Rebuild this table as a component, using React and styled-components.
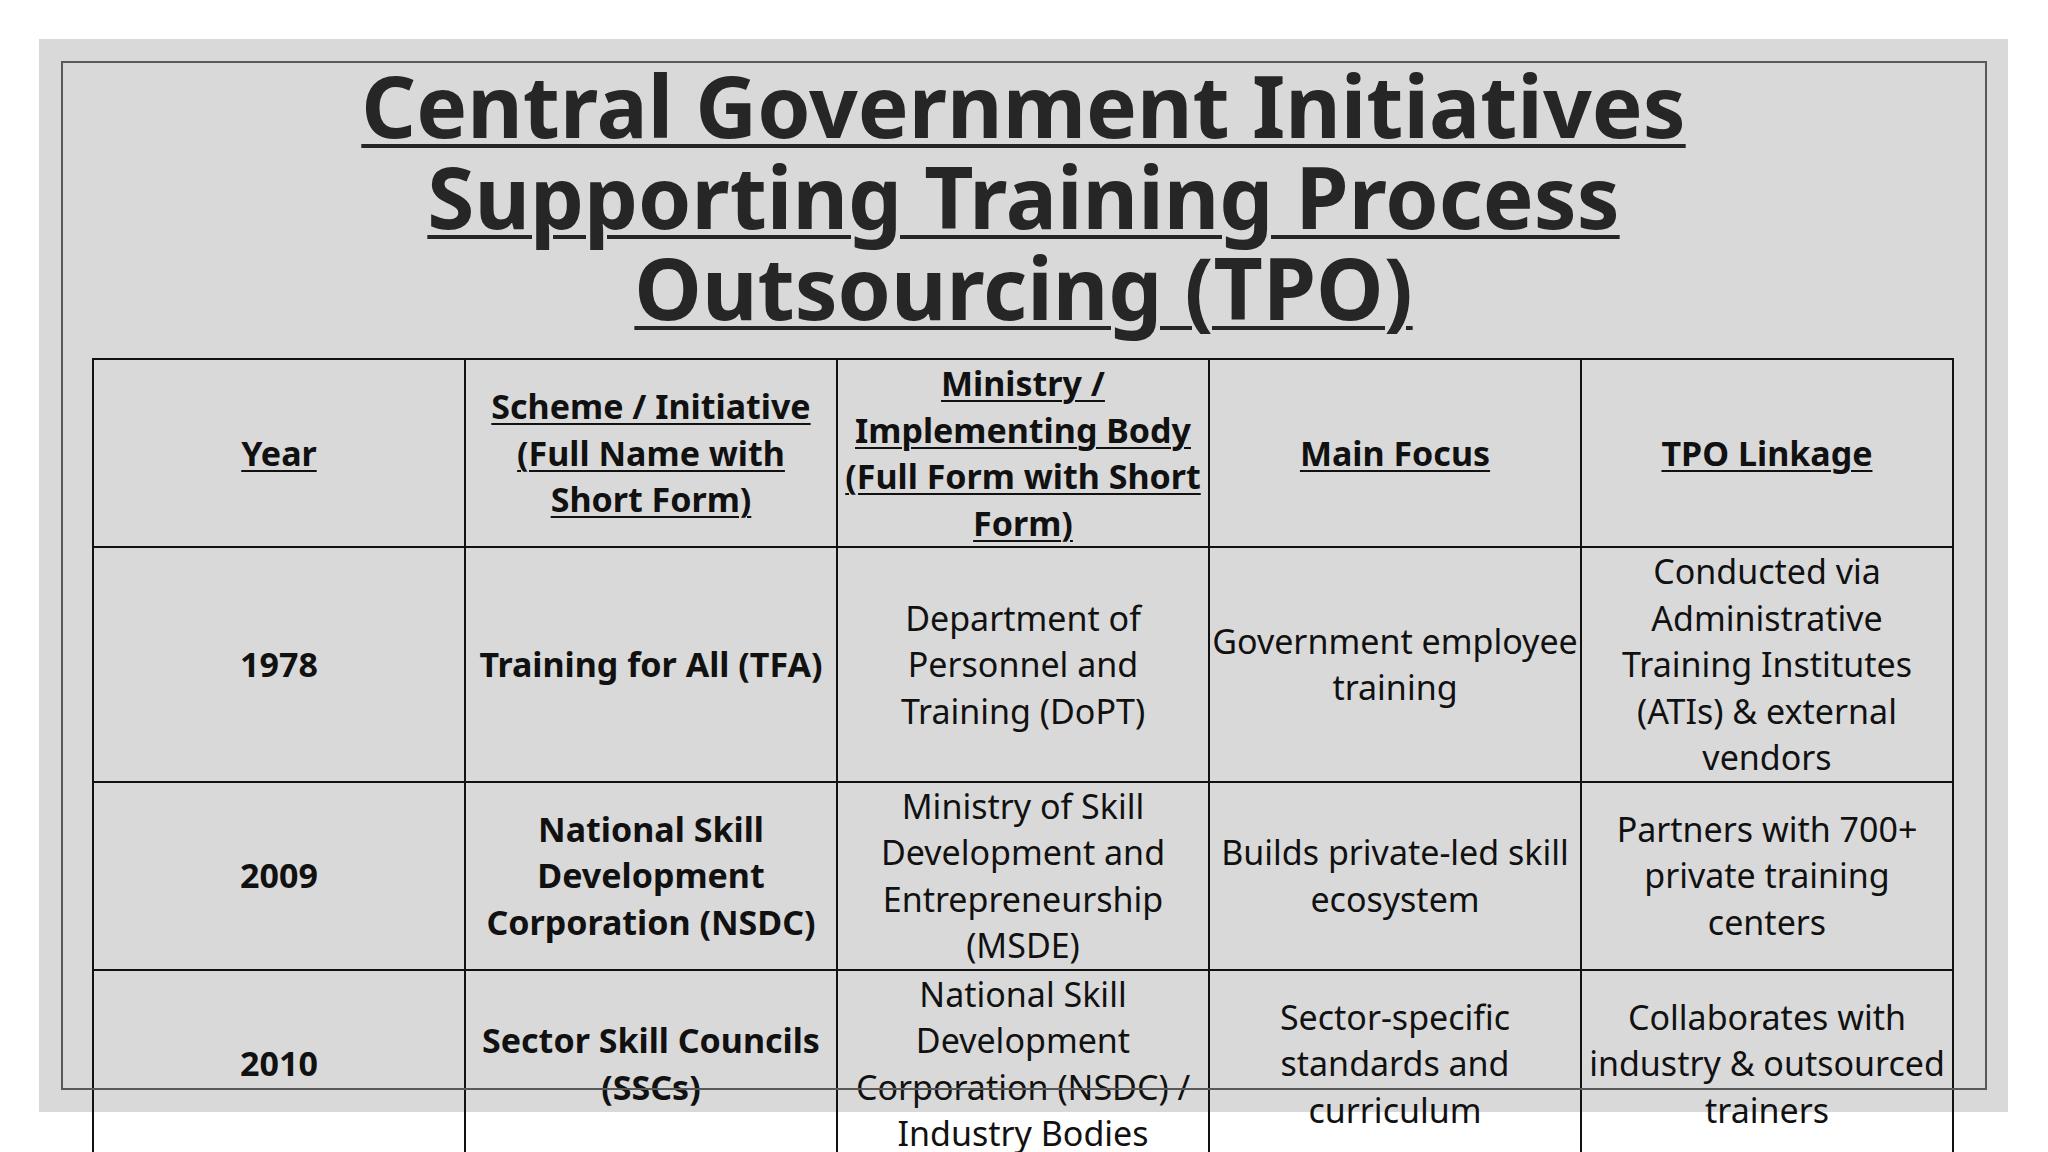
import React from "react";
import styled, { createGlobalStyle } from "styled-components";

const Global = createGlobalStyle`
  html, body {
    margin: 0;
    padding: 0;
    background: #ffffff;
  }
  body {
    font-family: "Noto Sans", "Open Sans", sans-serif;
  }
`;

const Page = styled.div`
  height: 1152px;
  box-sizing: border-box;
  overflow: hidden;
  padding: 39px 40px 0 39px;
`;

const Slide = styled.section`
  position: relative;
  height: 1073px;
  background: #d9d9d9;
  padding: 21px 0 0 53px;
  box-sizing: border-box;
`;

const Frame = styled.div`
  position: absolute;
  top: 22px;
  left: 22px;
  right: 21px;
  bottom: 22px;
  border: 2px solid #595959;
  pointer-events: none;
  z-index: 2;
`;

const Title = styled.h1`
  margin: 0 0 25px -53px;
  width: 1969px;
  font-size: 85.5px;
  line-height: 91px;
  font-weight: 700;
  color: #262626;
  text-align: center;
  text-decoration: underline;
  text-decoration-thickness: 4px;
  text-underline-offset: 6px;
`;

const Table = styled.table`
  border-collapse: collapse;
  width: 1862px;
  table-layout: fixed;
  color: #111111;
`;

const Cell = styled.td`
  border: 2px solid #111111;
  padding: 0 1px;
  text-align: center;
  vertical-align: middle;
  font-size: 34px;
  line-height: 46.5px;
  font-weight: ${(p) => (p.$bold ? 700 : 400)};
  height: ${(p) => p.$h}px;
  box-sizing: border-box;
`;

const Head = styled(Cell).attrs({ as: "th" })`
  font-weight: 700;
  text-decoration: underline;
  text-decoration-thickness: 2px;
  text-underline-offset: 4px;
`;

const headers = [
  "Year",
  "Scheme / Initiative (Full Name with Short Form)",
  "Ministry / Implementing Body (Full Form with Short Form)",
  "Main Focus",
  "TPO Linkage",
];

const rows = [
  {
    h: 234,
    cells: [
      "1978",
      "Training for All (TFA)",
      "Department of Personnel and Training (DoPT)",
      "Government employee training",
      "Conducted via Administrative Training Institutes (ATIs) & external vendors",
    ],
  },
  {
    h: 187,
    cells: [
      "2009",
      "National Skill Development Corporation (NSDC)",
      "Ministry of Skill Development and Entrepreneurship (MSDE)",
      "Builds private-led skill ecosystem",
      "Partners with 700+ private training centers",
    ],
  },
  {
    h: 187,
    cells: [
      "2010",
      "Sector Skill Councils (SSCs)",
      "National Skill Development Corporation (NSDC) / Industry Bodies",
      "Sector-specific standards and curriculum",
      "Collaborates with industry & outsourced trainers",
    ],
  },
];

export default function App() {
  return (
    <Page>
      <Global />
      <Slide>
        <Frame />
        <Title>
          Central Government Initiatives
          <br />
          Supporting Training Process
          <br />
          Outsourcing (TPO)
        </Title>
        <Table>
          <thead>
            <tr>
              {headers.map((t) => (
                <Head key={t} $h={187}>
                  {t}
                </Head>
              ))}
            </tr>
          </thead>
          <tbody>
            {rows.map((r) => (
              <tr key={r.cells[0]}>
                {r.cells.map((c, i) => (
                  <Cell key={i} $h={r.h} $bold={i < 2}>
                    {c}
                  </Cell>
                ))}
              </tr>
            ))}
          </tbody>
        </Table>
      </Slide>
    </Page>
  );
}
